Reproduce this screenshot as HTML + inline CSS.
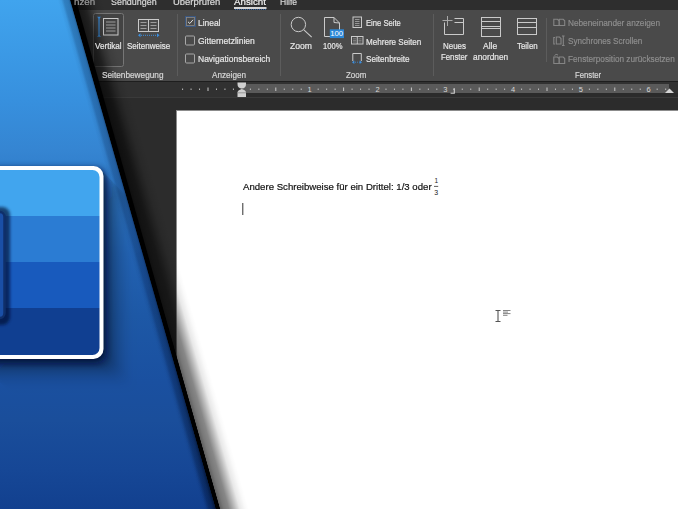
<!DOCTYPE html>
<html><head><meta charset="utf-8">
<style>
*{margin:0;padding:0;box-sizing:border-box}
html,body{width:678px;height:509px;overflow:hidden;background:#2c2c2c;font-family:"Liberation Sans",sans-serif;position:relative}
.a{position:absolute}
.t{position:absolute;white-space:nowrap;line-height:1;transform-origin:0 0;-webkit-text-stroke:0.2px currentColor}
</style></head><body>
<!-- tab row -->
<div class="a" style="left:0;top:0;width:678px;height:10px;background:#2e2e2e"></div>
<!-- ribbon -->
<div class="a" style="left:0;top:10px;width:678px;height:71px;background:#4a4a4a"></div>
<!-- ruler band -->
<div class="a" style="left:0;top:81px;width:678px;height:1px;background:#1e1e1e"></div>
<div class="a" style="left:0;top:82px;width:678px;height:15px;background:#313131"></div>
<div class="a" style="left:241px;top:84px;width:428px;height:9px;background:#5a5a5a"></div>
<div class="a" style="left:241px;top:93px;width:437px;height:4px;background:#2b2b2b"></div>
<div class="a" style="left:0;top:97px;width:678px;height:1px;background:#3a3a3a"></div>
<!-- page -->
<div class="a" style="left:176px;top:110px;width:502px;height:399px;background:#8c8c8c"></div>
<div class="a" style="left:177px;top:111px;width:501px;height:398px;background:#ffffff"></div>

<svg class="a" style="left:0;top:0" width="678" height="509" viewBox="0 0 678 509">
<line x1="177.5" y1="14" x2="177.5" y2="76" stroke="#5c5c5c" stroke-width="1"/>
<line x1="280.5" y1="14" x2="280.5" y2="76" stroke="#5c5c5c" stroke-width="1"/>
<line x1="433.5" y1="14" x2="433.5" y2="76" stroke="#5c5c5c" stroke-width="1"/>
<line x1="546.5" y1="18" x2="546.5" y2="62" stroke="#5c5c5c" stroke-width="1"/>
<rect x="234" y="7" width="32.5" height="2" fill="#d4d4d4"/>
<line x1="235" y1="9.5" x2="266" y2="9.5" stroke="#3060a0" stroke-width="1" stroke-dasharray="1 1"/>
<rect x="93.5" y="13.5" width="30" height="53" rx="2" fill="#434343" stroke="#767676" stroke-width="1"/>
<line x1="99" y1="17" x2="99" y2="36" stroke="#3b8fe0" stroke-width="1.2"/>
<path d="M97 16.8 L99 18.8 L101 16.8 Z M97 36.7 L99 34.7 L101 36.7 Z" fill="#3b8fe0"/>
<rect x="103.5" y="18.5" width="14.5" height="16.5" fill="none" stroke="#cacaca" stroke-width="1"/>
<line x1="106" y1="22" x2="115.5" y2="22" stroke="#9c9c9c" stroke-width="1"/>
<line x1="106" y1="25" x2="115.5" y2="25" stroke="#9c9c9c" stroke-width="1"/>
<line x1="106" y1="28" x2="115.5" y2="28" stroke="#9c9c9c" stroke-width="1"/>
<line x1="106" y1="31" x2="115.5" y2="31" stroke="#9c9c9c" stroke-width="1"/>
<rect x="138.5" y="19.5" width="20" height="12" fill="none" stroke="#cacaca" stroke-width="1"/>
<line x1="148.5" y1="19.5" x2="148.5" y2="31.5" stroke="#cacaca" stroke-width="1"/>
<line x1="140.5" y1="22.5" x2="146.5" y2="22.5" stroke="#9c9c9c" stroke-width="1"/>
<line x1="150.5" y1="22.5" x2="156.5" y2="22.5" stroke="#9c9c9c" stroke-width="1"/>
<line x1="140.5" y1="25.5" x2="146.5" y2="25.5" stroke="#9c9c9c" stroke-width="1"/>
<line x1="150.5" y1="25.5" x2="156.5" y2="25.5" stroke="#9c9c9c" stroke-width="1"/>
<line x1="140.5" y1="28.5" x2="146.5" y2="28.5" stroke="#9c9c9c" stroke-width="1"/>
<line x1="150.5" y1="28.5" x2="156.5" y2="28.5" stroke="#9c9c9c" stroke-width="1"/>
<line x1="139" y1="35.3" x2="158.5" y2="35.3" stroke="#3b8fe0" stroke-width="1" stroke-dasharray="1 1"/>
<path d="M140.5 33.3 L138 35.3 L140.5 37.3 Z M157 33.3 L159.5 35.3 L157 37.3 Z" fill="#3b8fe0"/>
<rect x="185.5" y="16.5" width="10" height="10" fill="none" stroke="#2a64b8" stroke-width="1" stroke-dasharray="1 1"/>
<rect x="186.5" y="17.5" width="8" height="8" fill="none" stroke="#8a8a8a" stroke-width="0.8"/>
<path d="M188 21.8 L189.8 23.5 L193 19.8" fill="none" stroke="#e0e0e0" stroke-width="1"/>
<rect x="185.5" y="36" width="9" height="9" rx="1" fill="none" stroke="#a8a8a8" stroke-width="1"/>
<rect x="185.5" y="54" width="9" height="9" rx="1" fill="none" stroke="#a8a8a8" stroke-width="1"/>
<circle cx="298.4" cy="24.5" r="7.2" fill="none" stroke="#cacaca" stroke-width="1"/>
<line x1="303.6" y1="29.7" x2="311.7" y2="37.2" stroke="#cacaca" stroke-width="1.1"/>
<path d="M324.5 17.5 L334 17.5 L339.5 23 L339.5 36.5 L324.5 36.5 Z M334 17.5 L334 22.5 L339.5 23" fill="none" stroke="#cacaca" stroke-width="1"/>
<rect x="329.8" y="29.3" width="14.2" height="8.8" fill="#2b88d8"/>
<text x="330.2" y="36.3" font-family="Liberation Sans" font-size="8" fill="#ffffff" textLength="13" lengthAdjust="spacingAndGlyphs">100</text>
<rect x="353" y="17" width="8.5" height="10.5" fill="none" stroke="#cacaca" stroke-width="1"/>
<line x1="355" y1="19.5" x2="359.5" y2="19.5" stroke="#aaaaaa" stroke-width="0.8"/>
<line x1="355" y1="21.5" x2="359.5" y2="21.5" stroke="#aaaaaa" stroke-width="0.8"/>
<line x1="355" y1="23.5" x2="359.5" y2="23.5" stroke="#aaaaaa" stroke-width="0.8"/>
<line x1="355" y1="25.5" x2="359.5" y2="25.5" stroke="#aaaaaa" stroke-width="0.8"/>
<rect x="351.5" y="36.5" width="11.5" height="7.5" fill="none" stroke="#cacaca" stroke-width="1"/>
<line x1="357.25" y1="36.5" x2="357.25" y2="44" stroke="#cacaca" stroke-width="1"/>
<line x1="353" y1="38.8" x2="356" y2="38.8" stroke="#9a9a9a" stroke-width="0.7"/><line x1="358.5" y1="38.8" x2="361.5" y2="38.8" stroke="#9a9a9a" stroke-width="0.7"/>
<line x1="353" y1="40.4" x2="356" y2="40.4" stroke="#9a9a9a" stroke-width="0.7"/><line x1="358.5" y1="40.4" x2="361.5" y2="40.4" stroke="#9a9a9a" stroke-width="0.7"/>
<line x1="353" y1="42" x2="356" y2="42" stroke="#9a9a9a" stroke-width="0.7"/><line x1="358.5" y1="42" x2="361.5" y2="42" stroke="#9a9a9a" stroke-width="0.7"/>
<path d="M352.8 61 L352.8 53.5 L361.3 53.5 L361.3 61" fill="none" stroke="#cacaca" stroke-width="1"/>
<line x1="353" y1="62.2" x2="361" y2="62.2" stroke="#3b8fe0" stroke-width="0.8" stroke-dasharray="1 1"/>
<path d="M354.3 60.4 L352 62.2 L354.3 64 Z M359.7 60.4 L362 62.2 L359.7 64 Z" fill="#3b8fe0"/>
<path d="M444.5 22.5 L444.5 34.5 L463.5 34.5 L463.5 18.5 L454.5 18.5 M454.5 22.5 L463.5 22.5" fill="none" stroke="#cacaca" stroke-width="1"/>
<path d="M447.5 16 L447.5 26 M442.5 20.5 L452.5 20.5" fill="none" stroke="#a8a8a8" stroke-width="1"/>
<rect x="481.5" y="17.5" width="19" height="19" fill="none" stroke="#cacaca" stroke-width="1"/>
<line x1="481.5" y1="21.5" x2="500.5" y2="21.5" stroke="#cacaca" stroke-width="1"/>
<line x1="481.5" y1="26.5" x2="500.5" y2="26.5" stroke="#cacaca" stroke-width="1"/>
<line x1="481.5" y1="28.5" x2="500.5" y2="28.5" stroke="#cacaca" stroke-width="1"/>
<rect x="517.5" y="18.5" width="19" height="16" fill="none" stroke="#cacaca" stroke-width="1"/>
<line x1="517.5" y1="22.5" x2="536.5" y2="22.5" stroke="#cacaca" stroke-width="1"/>
<line x1="517.5" y1="27.5" x2="536.5" y2="27.5" stroke="#cacaca" stroke-width="1"/>
<path d="M553.8 19.3 L557.5 19.3 L559 20.8 L559 25.5 L553.8 25.5 Z M559.3 19.3 L563.2 19.3 L564.7 20.8 L564.7 25.5 L559.3 25.5 Z" fill="none" stroke="#858585" stroke-width="1.1"/>
<path d="M555 37.5 L553.8 37.5 L553.8 44 L555 44 M556.3 37 L559.5 37 L561 38.5 L561 44 L556.3 44 Z M563.3 36 L563.3 45.5 M562 36 L564.6 36 M562 45.5 L564.6 45.5" fill="none" stroke="#858585" stroke-width="1.1"/>
<path d="M553.8 57 L557.5 57 L559 58.5 L559 63.5 L553.8 63.5 Z M559.3 57 L563.2 57 L564.7 58.5 L564.7 63.5 L559.3 63.5 Z" fill="none" stroke="#858585" stroke-width="1.1"/>
<path d="M554.5 55.5 Q556 53.5 558 55" fill="none" stroke="#858585" stroke-width="1"/>
<rect x="182.08" y="88.5" width="1" height="1.5" fill="#b8b8b8"/>
<rect x="190.55" y="88.5" width="1" height="1.5" fill="#b8b8b8"/>
<rect x="199.03" y="88.5" width="1" height="1.5" fill="#b8b8b8"/>
<rect x="207.50" y="87.5" width="1" height="3.5" fill="#c8c8c8"/>
<rect x="215.98" y="88.5" width="1" height="1.5" fill="#b8b8b8"/>
<rect x="224.45" y="88.5" width="1" height="1.5" fill="#b8b8b8"/>
<rect x="232.93" y="88.5" width="1" height="1.5" fill="#b8b8b8"/>
<rect x="249.88" y="88.5" width="1" height="1.5" fill="#b8b8b8"/>
<rect x="258.35" y="88.5" width="1" height="1.5" fill="#b8b8b8"/>
<rect x="266.82" y="88.5" width="1" height="1.5" fill="#b8b8b8"/>
<rect x="275.30" y="87.5" width="1" height="3.5" fill="#c8c8c8"/>
<rect x="283.77" y="88.5" width="1" height="1.5" fill="#b8b8b8"/>
<rect x="292.25" y="88.5" width="1" height="1.5" fill="#b8b8b8"/>
<rect x="300.73" y="88.5" width="1" height="1.5" fill="#b8b8b8"/>
<rect x="317.68" y="88.5" width="1" height="1.5" fill="#b8b8b8"/>
<rect x="326.15" y="88.5" width="1" height="1.5" fill="#b8b8b8"/>
<rect x="334.62" y="88.5" width="1" height="1.5" fill="#b8b8b8"/>
<rect x="343.10" y="87.5" width="1" height="3.5" fill="#c8c8c8"/>
<rect x="351.57" y="88.5" width="1" height="1.5" fill="#b8b8b8"/>
<rect x="360.05" y="88.5" width="1" height="1.5" fill="#b8b8b8"/>
<rect x="368.52" y="88.5" width="1" height="1.5" fill="#b8b8b8"/>
<rect x="385.48" y="88.5" width="1" height="1.5" fill="#b8b8b8"/>
<rect x="393.95" y="88.5" width="1" height="1.5" fill="#b8b8b8"/>
<rect x="402.43" y="88.5" width="1" height="1.5" fill="#b8b8b8"/>
<rect x="410.90" y="87.5" width="1" height="3.5" fill="#c8c8c8"/>
<rect x="419.38" y="88.5" width="1" height="1.5" fill="#b8b8b8"/>
<rect x="427.85" y="88.5" width="1" height="1.5" fill="#b8b8b8"/>
<rect x="436.32" y="88.5" width="1" height="1.5" fill="#b8b8b8"/>
<rect x="453.27" y="88.5" width="1" height="1.5" fill="#b8b8b8"/>
<rect x="461.75" y="88.5" width="1" height="1.5" fill="#b8b8b8"/>
<rect x="470.23" y="88.5" width="1" height="1.5" fill="#b8b8b8"/>
<rect x="478.70" y="87.5" width="1" height="3.5" fill="#c8c8c8"/>
<rect x="487.17" y="88.5" width="1" height="1.5" fill="#b8b8b8"/>
<rect x="495.65" y="88.5" width="1" height="1.5" fill="#b8b8b8"/>
<rect x="504.12" y="88.5" width="1" height="1.5" fill="#b8b8b8"/>
<rect x="521.08" y="88.5" width="1" height="1.5" fill="#b8b8b8"/>
<rect x="529.55" y="88.5" width="1" height="1.5" fill="#b8b8b8"/>
<rect x="538.02" y="88.5" width="1" height="1.5" fill="#b8b8b8"/>
<rect x="546.50" y="87.5" width="1" height="3.5" fill="#c8c8c8"/>
<rect x="554.98" y="88.5" width="1" height="1.5" fill="#b8b8b8"/>
<rect x="563.45" y="88.5" width="1" height="1.5" fill="#b8b8b8"/>
<rect x="571.92" y="88.5" width="1" height="1.5" fill="#b8b8b8"/>
<rect x="588.88" y="88.5" width="1" height="1.5" fill="#b8b8b8"/>
<rect x="597.35" y="88.5" width="1" height="1.5" fill="#b8b8b8"/>
<rect x="605.83" y="88.5" width="1" height="1.5" fill="#b8b8b8"/>
<rect x="614.30" y="87.5" width="1" height="3.5" fill="#c8c8c8"/>
<rect x="622.77" y="88.5" width="1" height="1.5" fill="#b8b8b8"/>
<rect x="631.25" y="88.5" width="1" height="1.5" fill="#b8b8b8"/>
<rect x="639.73" y="88.5" width="1" height="1.5" fill="#b8b8b8"/>
<rect x="656.67" y="88.5" width="1" height="1.5" fill="#b8b8b8"/>
<rect x="665.15" y="88.5" width="1" height="1.5" fill="#b8b8b8"/>
<text x="309.70" y="92" font-family="Liberation Sans" font-size="7.5" fill="#d8d8d8" text-anchor="middle">1</text>
<text x="377.50" y="92" font-family="Liberation Sans" font-size="7.5" fill="#d8d8d8" text-anchor="middle">2</text>
<text x="445.30" y="92" font-family="Liberation Sans" font-size="7.5" fill="#d8d8d8" text-anchor="middle">3</text>
<text x="513.10" y="92" font-family="Liberation Sans" font-size="7.5" fill="#d8d8d8" text-anchor="middle">4</text>
<text x="580.90" y="92" font-family="Liberation Sans" font-size="7.5" fill="#d8d8d8" text-anchor="middle">5</text>
<text x="648.70" y="92" font-family="Liberation Sans" font-size="7.5" fill="#d8d8d8" text-anchor="middle">6</text>
<path d="M237.5 82.5 L246 82.5 L246 84 Q246 88.3 241.75 88.5 Q237.5 88.3 237.5 84 Z" fill="#d0d0d0"/>
<path d="M241.75 89 Q246 90.3 246 92.5 L246 97 L237.5 97 L237.5 92.5 Q237.5 90.3 241.75 89 Z" fill="#d0d0d0"/>
<line x1="237.5" y1="92.8" x2="246" y2="92.8" stroke="#808080" stroke-width="0.7"/>
<path d="M665 93 L669.5 88.5 L674 93 Z" fill="#d4d4d4"/>
<path d="M454.3 88.3 L454.3 93.3 L450.6 93.3" fill="none" stroke="#d0d0d0" stroke-width="1.1"/>
<rect x="242.3" y="203" width="1" height="12" fill="#333"/>
<text x="436.2" y="182.8" font-family="Liberation Sans" font-size="6.5" fill="#1a1a1a" text-anchor="middle">1</text>
<line x1="434" y1="186.4" x2="438.2" y2="186.4" stroke="#333" stroke-width="0.8"/>
<text x="436.2" y="194.6" font-family="Liberation Sans" font-size="7" fill="#1a1a1a" text-anchor="middle">3</text>
<path d="M495.5 310.5 L500.5 310.5 M498 310.5 L498 321.5 M495.5 321.5 L500.5 321.5" fill="none" stroke="#555" stroke-width="1.1"/>
<line x1="503" y1="310.5" x2="510.5" y2="310.5" stroke="#666" stroke-width="0.8"/>
<line x1="503" y1="312.1" x2="508" y2="312.1" stroke="#666" stroke-width="0.8"/>
<line x1="503" y1="313.6" x2="510.5" y2="313.6" stroke="#666" stroke-width="0.8"/>
<line x1="503" y1="315.3" x2="507.5" y2="315.3" stroke="#666" stroke-width="0.8"/>
</svg>


<svg class="a" style="left:0;top:0" width="678" height="509" viewBox="0 0 678 509">
  <defs>
    <linearGradient id="bg" x1="0" y1="0" x2="0" y2="509" gradientUnits="userSpaceOnUse">
      <stop offset="0" stop-color="#40a4ee"/>
      <stop offset="0.196" stop-color="#3790de"/>
      <stop offset="0.295" stop-color="#3585d2"/>
      <stop offset="0.5" stop-color="#2262b2"/>
      <stop offset="0.62" stop-color="#1d58a6"/>
      <stop offset="0.75" stop-color="#1a50a0"/>
      <stop offset="0.825" stop-color="#1a4e9b"/>
      <stop offset="0.923" stop-color="#164796"/>
      <stop offset="1" stop-color="#12408f"/>
    </linearGradient>
    <!-- normal to edge: edge dir (0.2861,1) ; normal (0.9614,-0.2751) -->
    <linearGradient id="shg" x1="70" y1="0" x2="100.76" y2="-8.80" gradientUnits="userSpaceOnUse">
      <stop offset="0" stop-color="#000" stop-opacity="1"/>
      <stop offset="0.125" stop-color="#000" stop-opacity="1"/>
      <stop offset="0.145" stop-color="#000" stop-opacity="0.62"/>
      <stop offset="0.25" stop-color="#000" stop-opacity="0.53"/>
      <stop offset="0.40" stop-color="#000" stop-opacity="0.47"/>
      <stop offset="0.575" stop-color="#000" stop-opacity="0.27"/>
      <stop offset="0.73" stop-color="#000" stop-opacity="0.09"/>
      <stop offset="0.9" stop-color="#000" stop-opacity="0.02"/>
      <stop offset="1" stop-color="#000" stop-opacity="0"/>
    </linearGradient>
    <linearGradient id="edgeg" x1="70" y1="0" x2="58.46" y2="3.30" gradientUnits="userSpaceOnUse">
      <stop offset="0" stop-color="#001238" stop-opacity="0.45"/>
      <stop offset="0.15" stop-color="#001238" stop-opacity="0.3"/>
      <stop offset="0.5" stop-color="#001238" stop-opacity="0.24"/>
      <stop offset="0.72" stop-color="#001238" stop-opacity="0.06"/>
      <stop offset="1" stop-color="#001238" stop-opacity="0"/>
    </linearGradient>
    <linearGradient id="lsg" x1="103" y1="0" x2="140" y2="0" gradientUnits="userSpaceOnUse">
      <stop offset="0" stop-color="#00143c" stop-opacity="0.35"/>
      <stop offset="1" stop-color="#00143c" stop-opacity="0"/>
    </linearGradient>
    <filter id="ds" x="-20%" y="-20%" width="150%" height="150%"><feGaussianBlur stdDeviation="3"/></filter>
    <filter id="blur05" x="-50%" y="-50%" width="200%" height="200%"><feGaussianBlur stdDeviation="0.6"/></filter>
    <filter id="blur2" x="-50%" y="-50%" width="200%" height="200%"><feGaussianBlur stdDeviation="1.5"/></filter>
    <clipPath id="clipblue"><polygon points="0,0 70,0 215.6,509 0,509"/></clipPath>
    <clipPath id="logoin"><rect x="-30" y="170" width="129.5" height="185" rx="7" ry="7"/></clipPath>
    <linearGradient id="shg2" x1="70" y1="0" x2="87.31" y2="-4.95" gradientUnits="userSpaceOnUse">
      <stop offset="0" stop-color="#000" stop-opacity="0.6"/>
      <stop offset="0.55" stop-color="#000" stop-opacity="0.45"/>
      <stop offset="1" stop-color="#000" stop-opacity="0"/>
    </linearGradient>
    <linearGradient id="vm" x1="0" y1="0" x2="0" y2="300" gradientUnits="userSpaceOnUse">
      <stop offset="0" stop-color="#fff" stop-opacity="1"/>
      <stop offset="0.5" stop-color="#fff" stop-opacity="0.7"/>
      <stop offset="1" stop-color="#fff" stop-opacity="0"/>
    </linearGradient>
    <mask id="vmask" maskUnits="userSpaceOnUse" x="0" y="0" width="678" height="509"><rect x="0" y="0" width="678" height="300" fill="url(#vm)"/></mask>
    <linearGradient id="edgeg2" x1="70" y1="0" x2="60.39" y2="2.75" gradientUnits="userSpaceOnUse">
      <stop offset="0" stop-color="#000a20" stop-opacity="0.6"/>
      <stop offset="0.3" stop-color="#000a20" stop-opacity="0.3"/>
      <stop offset="1" stop-color="#000a20" stop-opacity="0"/>
    </linearGradient>
    <linearGradient id="vm2" x1="0" y1="250" x2="0" y2="509" gradientUnits="userSpaceOnUse">
      <stop offset="0" stop-color="#fff" stop-opacity="0"/>
      <stop offset="1" stop-color="#fff" stop-opacity="1"/>
    </linearGradient>
    <mask id="vmask2" maskUnits="userSpaceOnUse" x="0" y="0" width="678" height="509"><rect x="0" y="250" width="678" height="259" fill="url(#vm2)"/></mask>
  </defs>
  <polygon points="60,0 130,0 220,300 160,300" fill="url(#shg2)" mask="url(#vmask)" opacity="0.5"/>
  <polygon points="58,-20 130,-20 275.6,529 203.6,529" fill="url(#shg)"/>
  <polygon points="69,0 76,0 219.6,509 214.6,509" fill="#000"/>
  <polygon points="0,0 70,0 215.6,509 0,509" fill="url(#bg)"/>
  <polygon points="30,0 70,0 215.6,509 175.6,509" fill="url(#edgeg)"/>
  <polygon points="30,0 70,0 215.6,509 175.6,509" fill="url(#edgeg2)" mask="url(#vmask2)"/>
  <g clip-path="url(#clipblue)">
    <g filter="url(#blur05)"><rect x="-29" y="167" width="133.5" height="193" rx="10" fill="#001440" fill-opacity="0.0335"/><rect x="-28" y="168" width="133.5" height="193" rx="10" fill="#001440" fill-opacity="0.0326"/><rect x="-27" y="169" width="133.5" height="193" rx="10" fill="#001440" fill-opacity="0.0316"/><rect x="-26" y="170" width="133.5" height="193" rx="10" fill="#001440" fill-opacity="0.0307"/><rect x="-25" y="171" width="133.5" height="193" rx="10" fill="#001440" fill-opacity="0.0298"/><rect x="-24" y="172" width="133.5" height="193" rx="10" fill="#001440" fill-opacity="0.0288"/><rect x="-23" y="173" width="133.5" height="193" rx="10" fill="#001440" fill-opacity="0.0279"/><rect x="-22" y="174" width="133.5" height="193" rx="10" fill="#001440" fill-opacity="0.0269"/><rect x="-21" y="175" width="133.5" height="193" rx="10" fill="#001440" fill-opacity="0.0260"/><rect x="-20" y="176" width="133.5" height="193" rx="10" fill="#001440" fill-opacity="0.0250"/><rect x="-19" y="177" width="133.5" height="193" rx="10" fill="#001440" fill-opacity="0.0241"/><rect x="-18" y="178" width="133.5" height="193" rx="10" fill="#001440" fill-opacity="0.0231"/><rect x="-17" y="179" width="133.5" height="193" rx="10" fill="#001440" fill-opacity="0.0222"/><rect x="-16" y="180" width="133.5" height="193" rx="10" fill="#001440" fill-opacity="0.0213"/><rect x="-15" y="181" width="133.5" height="193" rx="10" fill="#001440" fill-opacity="0.0203"/><rect x="-14" y="182" width="133.5" height="193" rx="10" fill="#001440" fill-opacity="0.0194"/><rect x="-13" y="183" width="133.5" height="193" rx="10" fill="#001440" fill-opacity="0.0184"/><rect x="-12" y="184" width="133.5" height="193" rx="10" fill="#001440" fill-opacity="0.0175"/><rect x="-11" y="185" width="133.5" height="193" rx="10" fill="#001440" fill-opacity="0.0165"/><rect x="-10" y="186" width="133.5" height="193" rx="10" fill="#001440" fill-opacity="0.0156"/><rect x="-9" y="187" width="133.5" height="193" rx="10" fill="#001440" fill-opacity="0.0146"/><rect x="-8" y="188" width="133.5" height="193" rx="10" fill="#001440" fill-opacity="0.0137"/><rect x="-7" y="189" width="133.5" height="193" rx="10" fill="#001440" fill-opacity="0.0128"/><rect x="-6" y="190" width="133.5" height="193" rx="10" fill="#001440" fill-opacity="0.0118"/><rect x="-5" y="191" width="133.5" height="193" rx="10" fill="#001440" fill-opacity="0.0109"/><rect x="-4" y="192" width="133.5" height="193" rx="10" fill="#001440" fill-opacity="0.0099"/><rect x="-3" y="193" width="133.5" height="193" rx="10" fill="#001440" fill-opacity="0.0090"/><rect x="-2" y="194" width="133.5" height="193" rx="10" fill="#001440" fill-opacity="0.0080"/><rect x="-1" y="195" width="133.5" height="193" rx="10" fill="#001440" fill-opacity="0.0071"/><rect x="0" y="196" width="133.5" height="193" rx="10" fill="#001440" fill-opacity="0.0061"/><rect x="1" y="197" width="133.5" height="193" rx="10" fill="#001440" fill-opacity="0.0052"/><rect x="2" y="198" width="133.5" height="193" rx="10" fill="#001440" fill-opacity="0.0043"/><rect x="3" y="199" width="133.5" height="193" rx="10" fill="#001440" fill-opacity="0.0033"/><rect x="4" y="200" width="133.5" height="193" rx="10" fill="#001440" fill-opacity="0.0024"/><rect x="5" y="201" width="133.5" height="193" rx="10" fill="#001440" fill-opacity="0.0014"/><rect x="6" y="202" width="133.5" height="193" rx="10" fill="#001440" fill-opacity="0.0005"/></g>
    <rect x="-30" y="168" width="136" height="195" rx="10" fill="#001030" opacity="0.8" filter="url(#ds)"/>
  </g>
  <!-- logo -->
  <rect x="-30" y="166" width="133.5" height="193" rx="10" ry="10" fill="#ffffff"/>
  <g clip-path="url(#logoin)">
    <rect x="-30" y="170" width="140" height="46" fill="#41a5ee"/>
    <rect x="-30" y="216" width="140" height="46" fill="#2b7cd3"/>
    <rect x="-30" y="262" width="140" height="46" fill="#185abd"/>
    <rect x="-30" y="308" width="140" height="47" fill="#103f91"/>
    <rect x="-40" y="207" width="50" height="118" rx="8" fill="#001030" opacity="0.65" filter="url(#blur2)"/>
    <rect x="-40" y="212" width="44.5" height="106" rx="5" fill="#1a4fa6" stroke="#0f2f6a" stroke-width="2.5"/>
  </g>
</svg>
<span class="t" style="left:74.20px;top:-3.08px;font-size:9.6px;color:#9c9c9c;font-weight:400;transform:scaleX(1.0186);">nzen</span>
<span class="t" style="left:111.20px;top:-3.08px;font-size:9.6px;color:#dcdcdc;font-weight:400;transform:scaleX(0.9288);">Sendungen</span>
<span class="t" style="left:172.80px;top:-3.08px;font-size:9.6px;color:#dcdcdc;font-weight:400;transform:scaleX(0.9833);">Überprüfen</span>
<span class="t" style="left:233.80px;top:-3.08px;font-size:9.6px;color:#f4f4f4;font-weight:400;transform:scaleX(1.0137);">Ansicht</span>
<span class="t" style="left:279.90px;top:-3.08px;font-size:9.6px;color:#dcdcdc;font-weight:400;transform:scaleX(0.8905);">Hilfe</span>
<span class="t" style="left:95.00px;top:41.22px;font-size:9.6px;color:#e8e8e8;font-weight:400;transform:scaleX(0.8453);">Vertikal</span>
<span class="t" style="left:126.60px;top:41.22px;font-size:9.6px;color:#e8e8e8;font-weight:400;transform:scaleX(0.8331);">Seitenweise</span>
<span class="t" style="left:101.50px;top:69.72px;font-size:9.6px;color:#d8d8d8;font-weight:400;transform:scaleX(0.8603);">Seitenbewegung</span>
<span class="t" style="left:197.70px;top:17.92px;font-size:9.6px;color:#e8e8e8;font-weight:400;transform:scaleX(0.8786);">Lineal</span>
<span class="t" style="left:197.70px;top:35.92px;font-size:9.6px;color:#e8e8e8;font-weight:400;transform:scaleX(0.8875);">Gitternetzlinien</span>
<span class="t" style="left:197.70px;top:54.42px;font-size:9.6px;color:#e8e8e8;font-weight:400;transform:scaleX(0.8861);">Navigationsbereich</span>
<span class="t" style="left:212.00px;top:69.52px;font-size:9.6px;color:#d8d8d8;font-weight:400;transform:scaleX(0.8497);">Anzeigen</span>
<span class="t" style="left:290.00px;top:40.92px;font-size:9.6px;color:#e8e8e8;font-weight:400;transform:scaleX(0.8968);">Zoom</span>
<span class="t" style="left:323.00px;top:40.92px;font-size:9.6px;color:#e8e8e8;font-weight:400;transform:scaleX(0.7903);">100%</span>
<span class="t" style="left:365.80px;top:18.22px;font-size:9.6px;color:#e8e8e8;font-weight:400;transform:scaleX(0.7957);">Eine Seite</span>
<span class="t" style="left:365.80px;top:36.52px;font-size:9.6px;color:#e8e8e8;font-weight:400;transform:scaleX(0.8415);">Mehrere Seiten</span>
<span class="t" style="left:365.80px;top:54.22px;font-size:9.6px;color:#e8e8e8;font-weight:400;transform:scaleX(0.8515);">Seitenbreite</span>
<span class="t" style="left:346.40px;top:69.52px;font-size:9.6px;color:#d8d8d8;font-weight:400;transform:scaleX(0.8275);">Zoom</span>
<span class="t" style="left:442.70px;top:41.22px;font-size:9.6px;color:#e8e8e8;font-weight:400;transform:scaleX(0.8293);">Neues</span>
<span class="t" style="left:440.60px;top:52.22px;font-size:9.6px;color:#e8e8e8;font-weight:400;transform:scaleX(0.8115);">Fenster</span>
<span class="t" style="left:483.40px;top:41.22px;font-size:9.6px;color:#e8e8e8;font-weight:400;transform:scaleX(0.8875);">Alle</span>
<span class="t" style="left:472.80px;top:52.22px;font-size:9.6px;color:#e8e8e8;font-weight:400;transform:scaleX(0.8681);">anordnen</span>
<span class="t" style="left:516.70px;top:41.22px;font-size:9.6px;color:#e8e8e8;font-weight:400;transform:scaleX(0.8254);">Teilen</span>
<span class="t" style="left:568.00px;top:17.72px;font-size:9.6px;color:#8e8e8e;font-weight:400;transform:scaleX(0.8581);">Nebeneinander anzeigen</span>
<span class="t" style="left:568.00px;top:35.72px;font-size:9.6px;color:#8e8e8e;font-weight:400;transform:scaleX(0.8443);">Synchrones Scrollen</span>
<span class="t" style="left:568.00px;top:53.82px;font-size:9.6px;color:#8e8e8e;font-weight:400;transform:scaleX(0.8551);">Fensterposition zurücksetzen</span>
<span class="t" style="left:574.80px;top:69.52px;font-size:9.6px;color:#d8d8d8;font-weight:400;transform:scaleX(0.8054);">Fenster</span>
<span class="t" style="left:242.90px;top:181.80px;font-size:9.8px;color:#111111;font-weight:400;transform:scaleX(0.9811);-webkit-text-stroke:0.2px #111111;">Andere Schreibweise für ein Drittel: 1/3 oder</span>
</body></html>
